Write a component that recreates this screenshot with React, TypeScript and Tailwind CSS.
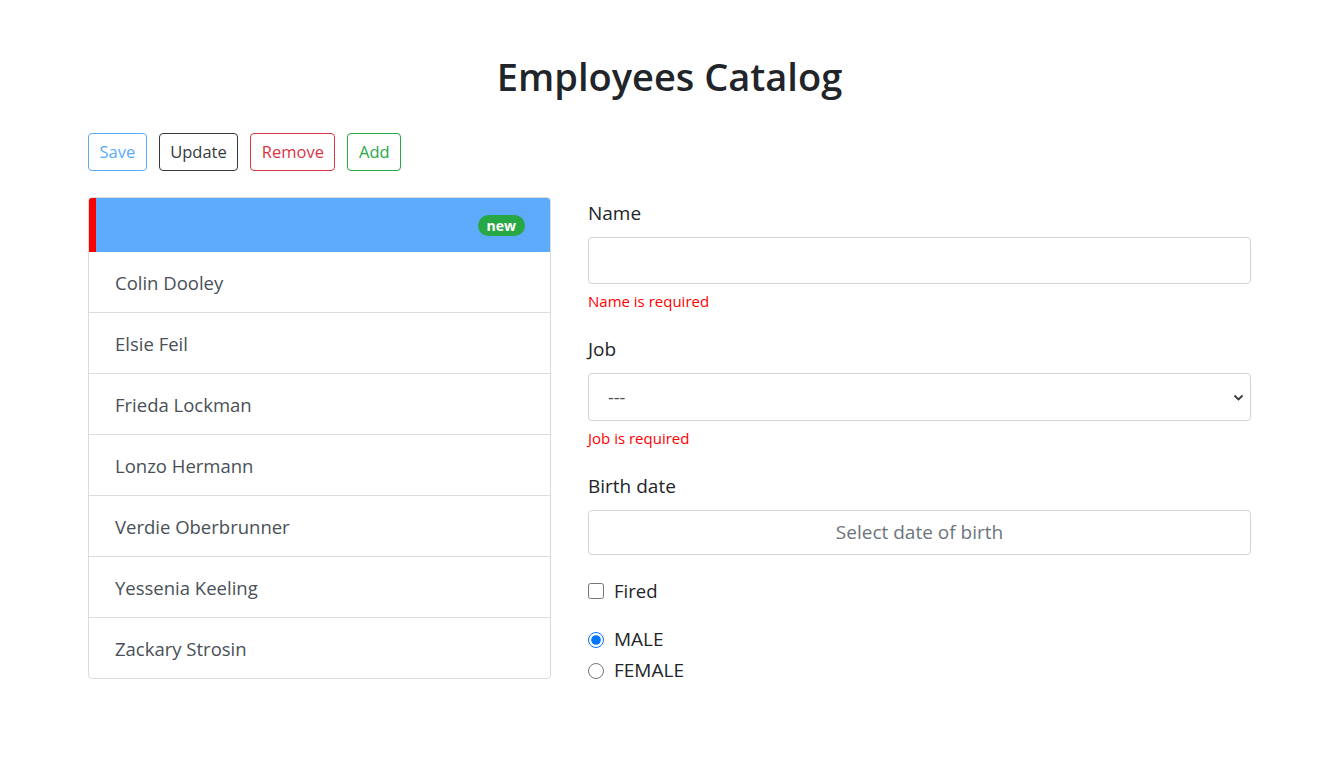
import React from "react";

const names = [
  "Colin Dooley",
  "Elsie Feil",
  "Frieda Lockman",
  "Lonzo Hermann",
  "Verdie Oberbrunner",
  "Yessenia Keeling",
  "Zackary Strosin",
];

export default function App() {
  const font = { fontFamily: '"Open Sans", "Noto Sans", sans-serif' };
  return (
    <div className="min-h-[767px] bg-white text-[#212529]" style={font}>
      <div className="w-[1163px] mx-auto pt-[48px]">
        <h1 className="text-center text-[38px] font-semibold leading-[56px] text-[#212529]">
          Employees Catalog
        </h1>
        <div className="flex gap-[12px] mt-[29px]">
          <button className="h-[38px] px-[10.5px] border border-[#5aabf9] text-[#5aabf9] rounded-[4px] text-[16.5px]">Save</button>
          <button className="h-[38px] px-[10.5px] border border-[#343a40] text-[#343a40] rounded-[4px] text-[16.5px]">Update</button>
          <button className="h-[38px] px-[10.5px] border border-[#dc3545] text-[#dc3545] rounded-[4px] text-[16.5px]">Remove</button>
          <button className="h-[38px] px-[10.5px] border border-[#28a745] text-[#28a745] rounded-[4px] text-[16.5px]">Add</button>
        </div>
        <div className="flex mt-[26px] gap-[37px]">
          <div className="w-[463px] shrink-0">
            <div className="border border-[#dcdcdc] rounded-[4px] overflow-hidden">
              <div className="h-[54px] bg-[#5eabfd] border-l-[7px] border-l-[#ff0000] flex items-center justify-end pr-[25px]">
                <span className="bg-[#28a745] text-white text-[14px] font-bold rounded-full px-[9px] h-[21px] leading-[21px]">new</span>
              </div>
              {names.map((n, i) => (
                <div
                  key={n}
                  className={
                    i === 0
                      ? "h-[60px] flex items-center pl-[26px] pt-[2px] text-[18.5px] text-[#495057]"
                      : "h-[61px] border-t border-[#dcdcdc] flex items-center pl-[26px] pt-[2px] text-[18.5px] text-[#495057]"
                  }
                >
                  {n}
                </div>
              ))}
            </div>
          </div>
          <div className="flex-1">
            <label className="block text-[19px] leading-[24px] mt-[4px] mb-[12px]">Name</label>
            <input className="block w-full h-[47px] border border-[#ced4da] rounded-[4px]" />
            <div className="text-[15px] leading-[20px] text-[#ff0000] mt-[7px]">Name is required</div>
            <label className="block text-[19px] leading-[24px] mt-[26px] mb-[12px]">Job</label>
            <div className="relative">
              <select className="block w-full h-[48px] border border-[#ced4da] rounded-[4px] appearance-none pl-[19px] text-[18px] text-[#495057] bg-white">
                <option>---</option>
              </select>
              <svg className="absolute right-[7px] top-[20px] pointer-events-none" width="11" height="9" viewBox="0 0 11 9">
                <path d="M1.5 2.5 L5.5 6.5 L9.5 2.5" stroke="#343a40" strokeWidth="1.8" fill="none" />
              </svg>
            </div>
            <div className="text-[15px] leading-[20px] text-[#ff0000] mt-[7px]">Job is required</div>
            <label className="block text-[19px] leading-[24px] mt-[26px] mb-[12px]">Birth date</label>
            <div className="h-[45px] border border-[#ced4da] rounded-[4px] flex items-center justify-center text-[19px] text-[#6c757d]">
              Select date of birth
            </div>
            <label className="flex items-center gap-[10px] mt-[24px] text-[18.5px] leading-[24px]">
              <input type="checkbox" className="w-[16px] h-[16px] m-0" />
              Fired
            </label>
            <div className="mt-[21px] flex flex-col">
              <label className="flex items-center gap-[10px] text-[19px] leading-[31px]">
                <input type="radio" name="g" defaultChecked className="w-[16px] h-[16px] m-0" />
                MALE
              </label>
              <label className="flex items-center gap-[10px] text-[19px] leading-[31px]">
                <input type="radio" name="g" className="w-[16px] h-[16px] m-0" />
                FEMALE
              </label>
            </div>
          </div>
        </div>
      </div>
    </div>
  );
}
